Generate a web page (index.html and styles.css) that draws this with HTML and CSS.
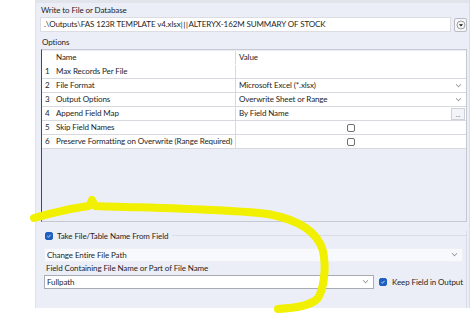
FILE: index.html
```html
<!DOCTYPE html>
<html>
<head>
<meta charset="utf-8">
<link rel="stylesheet" href="styles.css">
</head>
<body>
<div class="page">
  <div class="panel">
    <div class="topstrip"></div>
    <div class="caption">Write to File or Database</div>
    <div class="filerow">
      <div class="textbox">.\Outputs\FAS 123R TEMPLATE v4.xlsx<span class="pipes">|||</span>ALTERYX-162M SUMMARY OF STOCK</div>
      <div class="iconbtn">
        <svg width="10" height="10" viewBox="0 0 10 10"><circle cx="5" cy="5" r="4" fill="#f4f4f4" stroke="#8a8a8a" stroke-width="0.8"/><path d="M3 4.2 L7 4.2 L5 6.6 Z" fill="#111"/></svg>
      </div>
    </div>
    <div class="caption options">Options</div>
    <div class="grid">
      <div class="row header">
        <div class="num"></div><div class="name">Name</div><div class="value">Value</div>
      </div>
      <div class="row first">
        <div class="num">1</div><div class="name">Max Records Per File</div><div class="value"></div>
      </div>
      <div class="row">
        <div class="num">2</div><div class="name">File Format</div>
        <div class="value"><span>Microsoft Excel (*.xlsx)</span><span class="chev"></span></div>
      </div>
      <div class="row">
        <div class="num">3</div><div class="name">Output Options</div>
        <div class="value"><span>Overwrite Sheet or Range</span><span class="chev"></span></div>
      </div>
      <div class="row">
        <div class="num">4</div><div class="name">Append Field Map</div>
        <div class="value"><span>By Field Name</span><span class="dots">...</span></div>
      </div>
      <div class="row">
        <div class="num">5</div><div class="name">Skip Field Names</div>
        <div class="value center"><span class="cb"></span></div>
      </div>
      <div class="row">
        <div class="num">6</div><div class="name">Preserve Formatting on Overwrite (Range Required)</div>
        <div class="value center"><span class="cb"></span></div>
      </div>
    </div>
    <div class="group">
      <div class="legend">
        <span class="cb checked"><svg width="8" height="8" viewBox="0 0 8 8"><path d="M1.8 4.2 L3.3 5.6 L6.2 2.4" fill="none" stroke="#fff" stroke-width="1"/></svg></span>
        <span class="legendtext">Take File/Table Name From Field</span>
        <span class="legendline"></span>
      </div>
      <div class="groupbody">
        <div class="combo wide"><span>Change Entire File Path</span><span class="chev"></span></div>
        <div class="fieldlabel">Field Containing File Name or Part of File Name</div>
        <div class="fieldrow">
          <div class="combo field"><span>Fullpath</span><span class="chev"></span></div>
          <span class="cb checked"><svg width="8" height="8" viewBox="0 0 8 8"><path d="M1.8 4.2 L3.3 5.6 L6.2 2.4" fill="none" stroke="#fff" stroke-width="1"/></svg></span>
          <span class="keep">Keep Field in Output</span>
        </div>
      </div>
    </div>
  </div>
  <svg class="scribble" width="474" height="332" viewBox="0 0 474 332">
    <path d="M34 218 C 52 213, 72 208, 89 206 L 92 200 L 95 206 C 150 208, 225 209, 268 214 C 300 220, 318 233, 323 251 C 327 270, 323 290, 318 298 C 311 306, 296 308, 278 309" fill="none" stroke="#f0f000" stroke-width="8" stroke-linecap="round" stroke-linejoin="round"/>
  </svg>
</div>
</body>
</html>
```

FILE: styles.css
```css
* { box-sizing: border-box; }
html, body { margin: 0; padding: 0; background: #fff; }
body {
  font-family: "Lato", "Noto Sans", sans-serif;
  font-size: 8px;
  letter-spacing: -0.1px;
  color: #1e1e1e;
}
.page {
  position: relative;
  width: 474px;
  height: 332px;
  overflow: hidden;
}
.panel {
  margin-left: 35px;
  width: 435px;
  height: 308px;
  background: #eceef7;
  border-left: 1px solid #e0e2ea;
  border-right: 1px solid #d9dce6;
  display: flex;
  flex-direction: column;
}
.topstrip {
  height: 3px;
  background: #e2e4ec;
}
.caption {
  height: 13px;
  line-height: 13px;
  padding-left: 5px;
  margin-top: 1px;
}
.filerow {
  display: flex;
  align-items: center;
  height: 15px;
  padding-left: 4px;
}
.textbox {
  width: 411px;
  height: 15px;
  line-height: 13px;
  background: #fff;
  border: 1px solid #dcdde3;
  padding-left: 3px;
  white-space: nowrap;
  overflow: hidden;
}
.pipes {
  font-family: "DejaVu Sans", sans-serif;
  font-size: 7px;
  letter-spacing: 0.3px;
}
.iconbtn {
  margin-left: 3px;
  width: 13px;
  height: 14px;
  border: 1px solid #b9bcc6;
  border-radius: 2px;
  background: #f7f7f9;
  display: flex;
  align-items: center;
  justify-content: center;
}
.options {
  margin-top: 4px;
  padding-left: 6px;
}
.grid {
  margin-left: 5px;
  width: 426px;
  height: 173px;
  border: 1px solid #c6c9d2;
  border-left: 1px solid #4a4a4a;
}
.row {
  display: flex;
  height: 14px;
  line-height: 13px;
  border-bottom: 1px solid #d8d9de;
}
.row.header { height: 15px; border-bottom: 1px solid #fff; padding-top: 1px; }
.row .num {
  width: 11px;
  padding-left: 3px;
  background: #fff;
}
.row .name {
  width: 183px;
  padding-left: 3px;
  background: #fff;
  border-right: 1px solid #d8d9de;
  white-space: nowrap;
}
.row .value {
  flex: 1;
  padding-left: 3px;
  background: #fff;
  display: flex;
  align-items: center;
  justify-content: space-between;
  padding-right: 3px;
}
.row.header .value { align-items: flex-start; }
.row .value.center { justify-content: center; padding-left: 0; padding-right: 0; }
.chev {
  width: 5px;
  height: 5px;
  border-right: 1px solid #8c8c8c;
  border-bottom: 1px solid #8c8c8c;
  transform: rotate(45deg) scale(0.8);
  margin-top: -3px;
  margin-right: 2px;
}
.dots {
  width: 14px;
  height: 12px;
  border: 1px solid #cfd1d8;
  background: #f3f4f7;
  color: #777;
  font-size: 7px;
  line-height: 10px;
  text-align: center;
  margin-right: -2px;
}
.cb {
  display: inline-flex;
  width: 8px;
  height: 8px;
  border: 1px solid #707070;
  border-radius: 2px;
  background: #fff;
  align-items: center;
  justify-content: center;
}
.cb.checked {
  background: #1f5fbf;
  border-color: #1f5fbf;
}
.group {
  margin-top: 9px;
  margin-right: 2px;
  display: flex;
  flex-direction: column;
  flex: 1;
  border-right: 1px solid #d9dce6;
}
.legend {
  display: flex;
  align-items: center;
  height: 9px;
  padding-left: 9px;
}
.legendtext { margin-left: 4px; white-space: nowrap; }
.legendline {
  flex: 1;
  height: 1px;
  background: #d9dce6;
  margin-left: 4px;
  margin-top: -1px;
}
.groupbody {
  padding-left: 8px;
  padding-right: 3px;
  padding-top: 8px;
}
.combo {
  height: 14px;
  display: flex;
  align-items: center;
  justify-content: space-between;
  padding-left: 2px;
  padding-right: 3px;
  white-space: nowrap;
}
.combo.wide {
  background: #f8f9fc;
  border: 1px solid #eef0f6;
}
.fieldlabel {
  height: 13px;
  line-height: 13px;
  padding-left: 2px;
}
.fieldrow {
  display: flex;
  align-items: center;
}
.combo.field {
  width: 334px;
  background: #fff;
  border: 1px solid #a9abb3;
}
.fieldrow .cb { margin-left: 5px; }
.keep { margin-left: 5px; white-space: nowrap; }
.scribble {
  position: absolute;
  left: 0;
  top: 0;
  pointer-events: none;
}
```
